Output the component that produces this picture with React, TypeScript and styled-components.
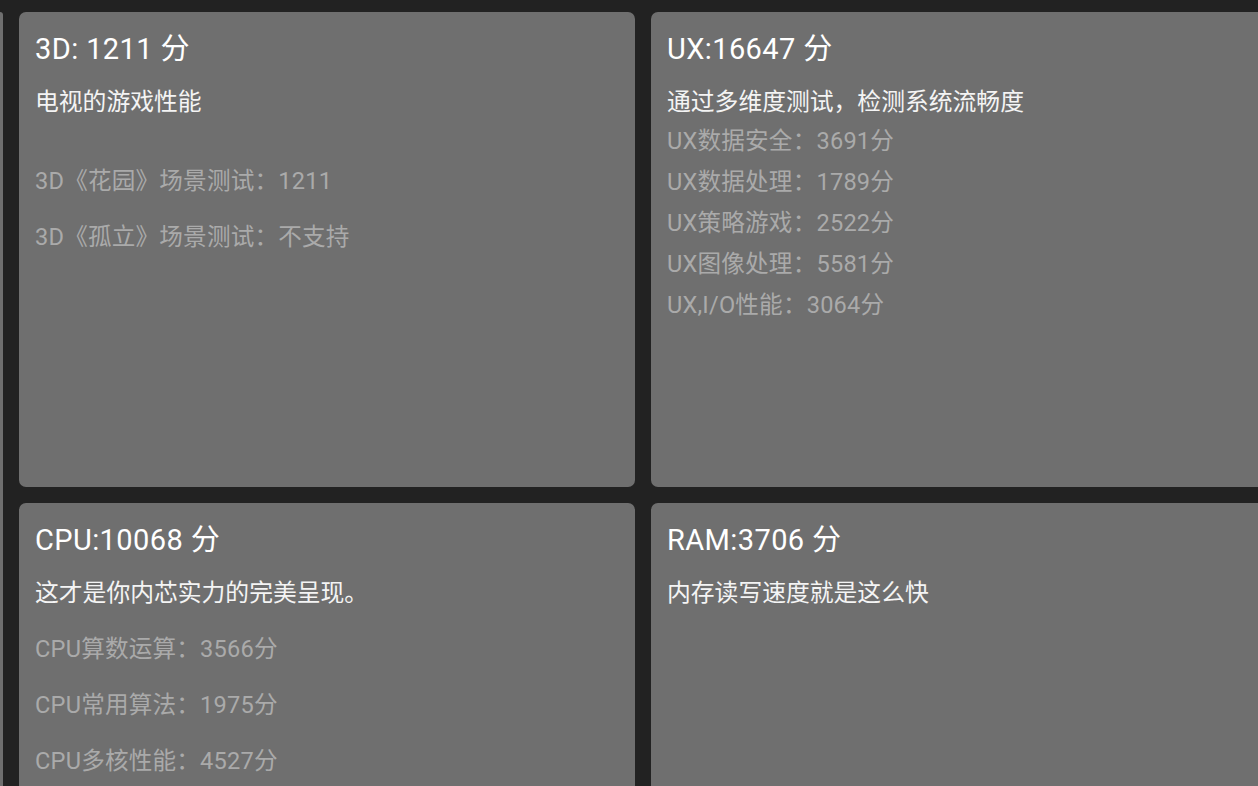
import React from "react";
import styled, { createGlobalStyle } from "styled-components";

const Global = createGlobalStyle`
  html, body { margin: 0; padding: 0; background: #222222; overflow: hidden; }
  body { font-family: Roboto, "Noto Sans CJK SC", sans-serif; }
`;

const Page = styled.div`
  width: 1258px;
  height: 786px;
  overflow: hidden;
  background: #222222;
  padding-top: 12px;
  box-sizing: border-box;
`;

const Grid = styled.div`
  display: grid;
  grid-template-columns: 3px 616px 616px;
  grid-auto-rows: 475px;
  column-gap: 16px;
  row-gap: 16px;
`;

const Sliver = styled.div`
  grid-row: 1 / span 2;
  background: #6f6f6f;
  border-radius: 0 6px 6px 0;
`;

const Card = styled.div`
  background: #6f6f6f;
  border-radius: 7px;
  padding: 20px 16px 0 16px;
  box-sizing: border-box;
  overflow: hidden;
`;

const Title = styled.div`
  color: #ffffff;
  font-family: Roboto, "Noto Sans CJK SC", sans-serif;
  font-size: 29px;
  line-height: 34px;
  letter-spacing: 0.4px;
`;

const Subtitle = styled.div`
  color: #f4f4f4;
  font-family: "Noto Sans CJK SC", sans-serif;
  font-size: 23.8px;
  line-height: 32px;
  margin-top: 18px;
`;

const List = styled.div<{ $gap: number; $top: number }>`
  display: flex;
  flex-direction: column;
  gap: ${(p) => p.$gap}px;
  margin-top: ${(p) => p.$top}px;
`;

const Item = styled.div`
  color: #aaaaaa;
  font-family: Roboto, "Noto Sans CJK SC", sans-serif;
  font-size: 23.6px;
  line-height: 30px;
  letter-spacing: 0.2px;
`;

type CardData = {
  title: string;
  subtitle: string;
  items: string[];
  gap: number;
  top: number;
};

const cards: CardData[] = [
  {
    title: "3D: 1211 分",
    subtitle: "电视的游戏性能",
    items: ["3D《花园》场景测试：1211", "3D《孤立》场景测试：不支持"],
    gap: 26,
    top: 50,
  },
  {
    title: "UX:16647 分",
    subtitle: "通过多维度测试，检测系统流畅度",
    items: [
      "UX数据安全：3691分",
      "UX数据处理：1789分",
      "UX策略游戏：2522分",
      "UX图像处理：5581分",
      "UX,I/O性能：3064分",
    ],
    gap: 11,
    top: 10,
  },
  {
    title: "CPU:10068 分",
    subtitle: "这才是你内芯实力的完美呈现。",
    items: ["CPU算数运算：3566分", "CPU常用算法：1975分", "CPU多核性能：4527分"],
    gap: 26,
    top: 27,
  },
  {
    title: "RAM:3706 分",
    subtitle: "内存读写速度就是这么快",
    items: [],
    gap: 0,
    top: 0,
  },
];

export default function App() {
  return (
    <Page>
      <Global />
      <Grid>
        <Sliver />
        {cards.map((c) => (
          <Card key={c.title}>
            <Title>{c.title}</Title>
            <Subtitle>{c.subtitle}</Subtitle>
            {c.items.length > 0 && (
              <List $gap={c.gap} $top={c.top}>
                {c.items.map((it) => (
                  <Item key={it}>{it}</Item>
                ))}
              </List>
            )}
          </Card>
        ))}
      </Grid>
    </Page>
  );
}
